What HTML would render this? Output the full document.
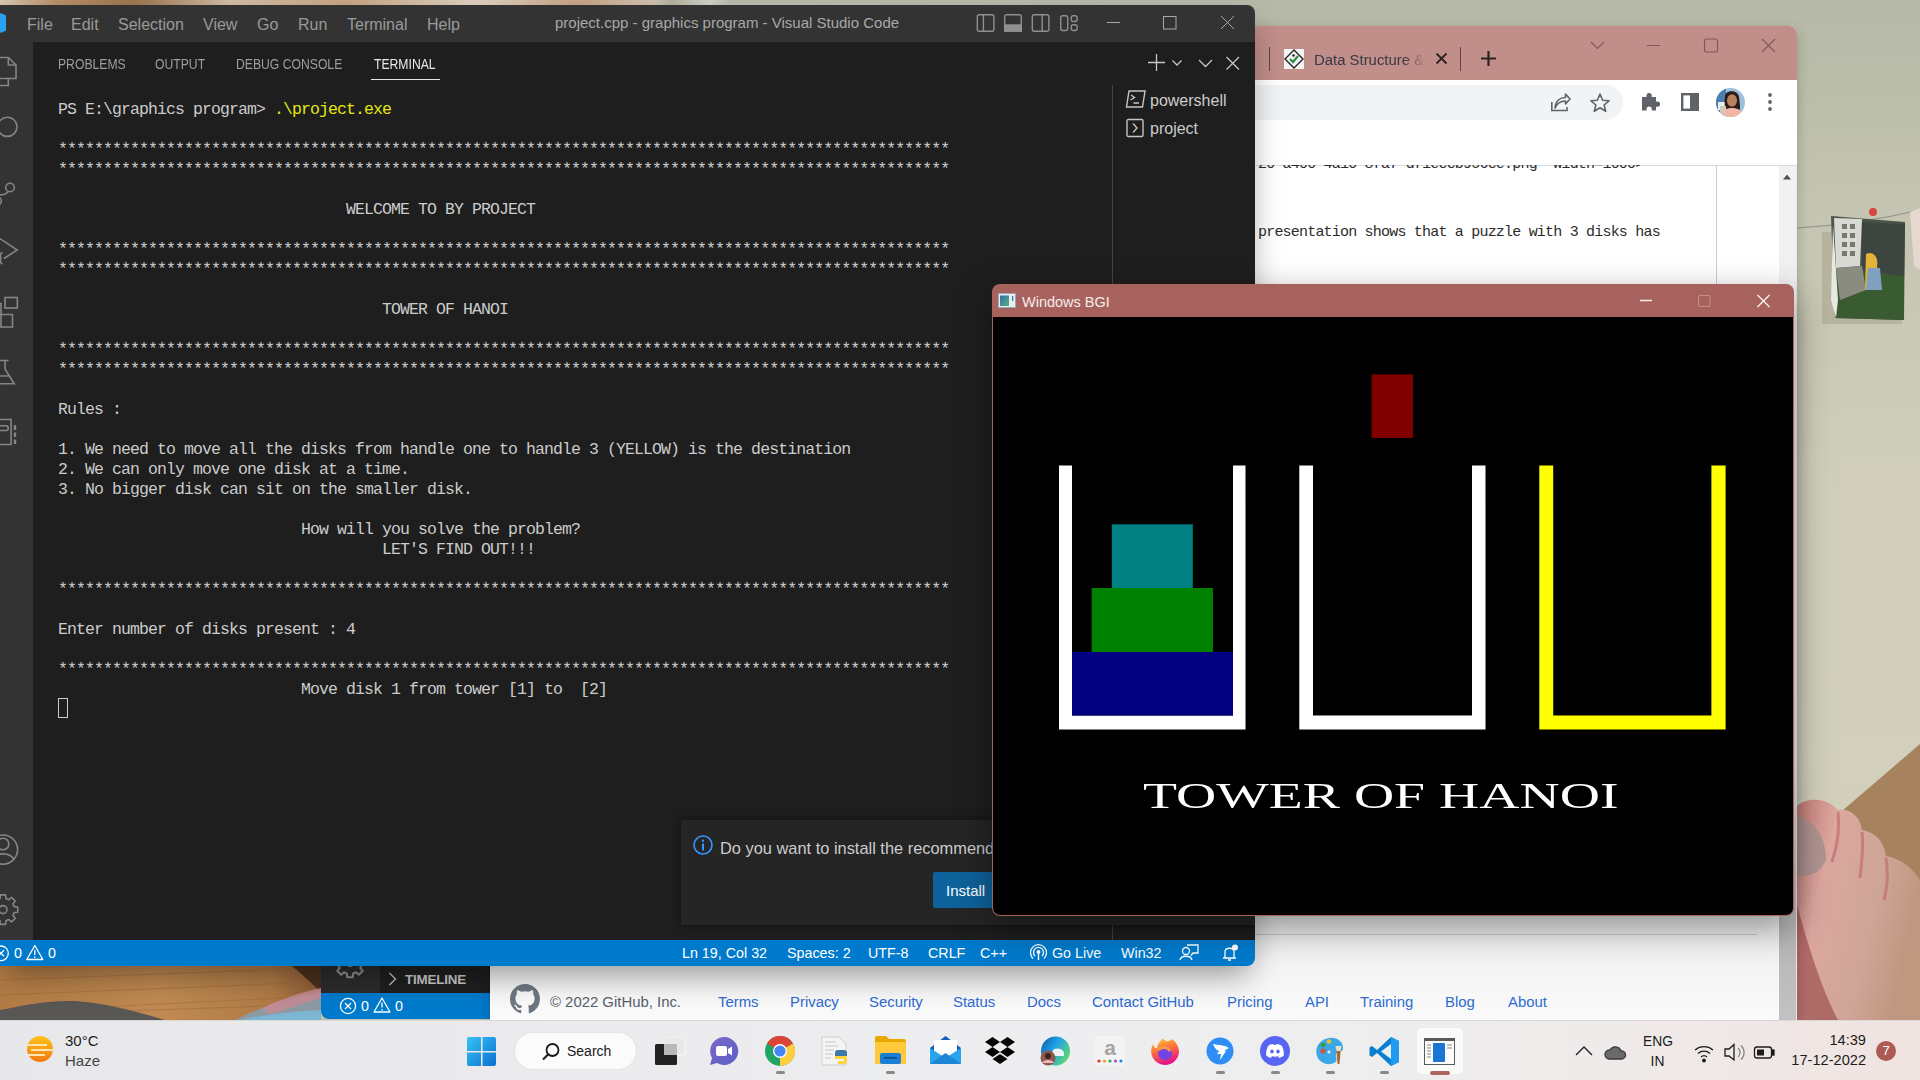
<!DOCTYPE html>
<html><head><meta charset="utf-8">
<style>
*{margin:0;padding:0;box-sizing:border-box}
html,body{width:1920px;height:1080px;overflow:hidden;position:relative;background:#c0c0b0;font-family:"Liberation Sans",sans-serif}
.a{position:absolute}
.mono{font-family:"Liberation Mono",monospace}
/* wallpaper */
#wp-top{left:0;top:0;width:1920px;height:30px;background:linear-gradient(90deg,#c9a887 0%,#d9c3a8 10%,#c3a07c 20%,#dbc8b0 30%,#c7a684 45%,#cfc1aa 55%,#b9bba9 65%,#b9bcab 100%)}
#wp-right{left:1797px;top:0;width:123px;height:1020px;background:linear-gradient(180deg,#b8bcab 0%,#c9c9b6 12%,#d6d4c1 30%,#d9d7c4 60%,#d2cdb9 72%,#c9a99a 80%,#d79a8f 88%,#c07466 100%)}
#wp-floor{left:0;top:960px;width:330px;height:60px;background:linear-gradient(180deg,#a8733f,#b98249 60%,#6b6460 100%)}

/* VS Code */
#vsc{left:0;top:0;width:1255px;height:966px;overflow:hidden}
#vsc-sh{left:0;top:5px;width:1255px;height:961px;border-radius:0 8px 8px 0;box-shadow:0 14px 32px -6px rgba(0,0,0,.4)}
#vsc .title{left:0;top:5px;width:1255px;height:37px;background:#333333;border-radius:0 8px 0 0}
#vsc .menu{top:16px;font-size:16px;color:#9a9a9a;}
#vsc .wtitle{top:14px;left:555px;font-size:15px;color:#a8a8a8}
#vsc .act{left:0;top:42px;width:33px;height:898px;background:#333333}
#vsc .panel{left:33px;top:42px;width:1222px;height:898px;background:#1e1e1e}
#vsc .tab{top:56px;font-size:14.5px;transform:scaleX(0.84);transform-origin:0 0;color:#9d9d9d;white-space:nowrap}
.st{top:945px;font-size:14.3px;color:#fff;white-space:nowrap}
#vsc .status{left:0;top:940px;width:1255px;height:26px;background:#007acc;border-radius:0 0 8px 0}
.term{left:58px;top:100px;font-size:16.5px;letter-spacing:-0.9px;line-height:20px;color:#cccccc;white-space:pre}
.y{color:#e5e510}

/* Chrome */
#chr{left:490px;top:26px;width:1307px;height:994px;background:#fff;border-radius:8px 8px 0 0;overflow:hidden;box-shadow:0 4px 14px rgba(0,0,0,.2)}
.gh{top:967.5px;font-size:14.9px;color:#2e6bd1;white-space:nowrap}
/* BGI */
#bgi{left:992px;top:284px;width:802px;height:632px;background:#a8625e;border-radius:8px;overflow:hidden;box-shadow:0 12px 36px rgba(0,0,0,.4)}
#bgi .cv{left:1px;top:33px;width:800px;height:598px;background:#000;border-radius:0 0 7px 7px;overflow:hidden}

/* taskbar */
#tb{left:0;top:1020px;width:1920px;height:60px;background:linear-gradient(90deg,#e7e8eb 0%,#ebe9eb 25%,#ecedef 45%,#eeeeef 70%,#efe9e8 88%,#f0e3e0 100%);border-top:1px solid #d9d9d9}
</style></head>
<body>
<svg class="a" style="left:0;top:0" width="1920" height="1080" viewBox="0 0 1920 1080">
  <defs>
    <linearGradient id="wall" x1="0" y1="0" x2="0" y2="1"><stop offset="0" stop-color="#b6b9a7"/><stop offset="0.2" stop-color="#c3c4b1"/><stop offset="0.45" stop-color="#d0cebb"/><stop offset="0.75" stop-color="#d2d0bc"/><stop offset="1" stop-color="#cfcbb6"/></linearGradient>
    <linearGradient id="topg" x1="0" y1="0" x2="1" y2="0"><stop offset="0" stop-color="#d8c8b4"/><stop offset="0.03" stop-color="#b98f68"/><stop offset="0.07" stop-color="#9c7650"/><stop offset="0.12" stop-color="#d3bfa6"/><stop offset="0.18" stop-color="#c8a684"/><stop offset="0.25" stop-color="#e0d3c2"/><stop offset="0.3" stop-color="#c7a483"/><stop offset="0.34" stop-color="#d0c2b0"/><stop offset="0.35" stop-color="#b4b39e"/><stop offset="0.37" stop-color="#d3d3c8"/><stop offset="0.38" stop-color="#b9bcab"/><stop offset="1" stop-color="#b6b9a8"/></linearGradient>
    <linearGradient id="wood" x1="0" y1="0" x2="1" y2="0"><stop offset="0" stop-color="#b27b45"/><stop offset="0.5" stop-color="#c08a52"/><stop offset="0.85" stop-color="#b07a46"/><stop offset="1" stop-color="#8a5a34"/></linearGradient>
    <linearGradient id="foot" x1="0" y1="0" x2="1" y2="0.4"><stop offset="0" stop-color="#c77d78"/><stop offset="0.3" stop-color="#dca79f"/><stop offset="0.7" stop-color="#cfa598"/><stop offset="1" stop-color="#c09880"/></linearGradient>
  </defs>
  <rect x="0" y="0" width="1920" height="30" fill="url(#topg)"/>
  <rect x="1255" y="0" width="665" height="1020" fill="url(#wall)"/>
  <!-- hanging photo -->
  <path d="M1797 228 C1830 226 1870 222 1920 210" stroke="#8f8f86" stroke-width="1.2" fill="none"/>
  <rect x="1822" y="232" width="80" height="92" fill="#a8a48c" opacity="0.55"/>
  <path d="M1831 216 L1905 222 L1904 320 L1835 318 Z" fill="#4a5448"/>
  <path d="M1834 218 L1862 219 L1860 266 L1836 268 Z" fill="#d9d9d4"/>
  <path d="M1842 224 h5 v5 h-5z M1850 224 h5 v5 h-5z M1842 233 h5 v5 h-5z M1850 233 h5 v5 h-5z M1842 242 h5 v5 h-5z M1850 242 h5 v5 h-5z M1842 251 h5 v5 h-5z M1850 251 h5 v5 h-5z" fill="#77776f"/>
  <path d="M1862 222 L1905 224 L1904 280 L1862 270 Z" fill="#3d4540"/>
  <path d="M1836 268 L1904 276 L1904 320 L1835 318 Z" fill="#3a5a32"/>
  <path d="M1836 268 L1862 266 L1866 290 L1840 300 Z" fill="#8a8c80"/>
  <path d="M1866 254 C1873 250 1879 258 1877 266 L1880 288 L1865 290 Z" fill="#e2b53a"/>
  <path d="M1868 268 L1880 268 L1882 290 L1866 290 Z" fill="#7fa0c0"/>
  <path d="M1833 225 L1838 300 L1836 318 L1831 300 Z" fill="#e8e8e2"/>
  <circle cx="1873" cy="212" r="4" fill="#d8453f"/>
  <path d="M1910 212 L1920 208 L1920 270 L1914 266 Z" fill="#e6d8d0"/>
  <!-- leg and foot -->
  <path d="M1920 744 L1842 811 L1830 900 L1920 960 Z" fill="#a6825e"/>
  <path d="M1797 806 C1805 798 1825 796 1838 810 C1850 808 1860 816 1862 830 C1874 832 1884 840 1886 856 C1898 858 1912 866 1920 880 L1920 1020 L1797 1020 Z" fill="url(#foot)"/>
  <path d="M1797 815 C1812 820 1826 835 1826 860 C1820 875 1805 878 1797 874 Z" fill="#a89290" opacity="0.85"/>
  <path d="M1832 862 C1836 850 1840 830 1838 812 M1860 878 C1862 860 1864 845 1862 832 M1884 900 C1888 885 1888 870 1886 858" stroke="#c2706e" stroke-width="3" fill="none" opacity="0.75"/>
  <path d="M1797 905 C1808 945 1822 990 1838 1020 L1797 1020 Z" fill="#8e3b3a" opacity="0.55"/>
  <!-- floor -->
  <rect x="0" y="966" width="321" height="54" fill="url(#wood)"/>
  <path d="M0 980 L321 968 M0 995 L321 982 M40 1010 L321 996 M100 1012 L321 1004" stroke="#9b6a3a" stroke-width="1.2" opacity="0.5"/>
  <path d="M292 966 L321 966 L321 992 C312 984 302 974 292 966 Z" fill="#3a2618" opacity="0.8"/>
  <path d="M0 1010 C20 1006 45 1000 75 1001 C105 1003 135 1011 165 1020 L0 1020 Z" fill="#595754"/>
  <path d="M235 1020 C255 1010 285 998 321 992 L321 1020 Z" fill="#8d9aa4"/>
  <path d="M262 1008 C280 1000 300 992 321 988 L321 998 C300 1004 285 1010 270 1014 Z" fill="#c88b96" opacity="0.85"/>
  <path d="M240 1020 C262 1015 290 1012 321 1010 L321 1020 Z" fill="#79bde0" opacity="0.8"/>
</svg>

<div id="vsc2" class="a" style="left:321px;top:966px;width:169px;height:53px;overflow:hidden;border-radius:0 0 0 8px">
  <div class="a" style="left:0;top:0;width:59px;height:27px;background:#2c2c2c"></div>
  <div class="a" style="left:59px;top:0;width:110px;height:27px;background:#1f1f1f"></div>
  <svg class="a" style="left:12px;top:-21px" width="34" height="34" viewBox="0 0 34 34" fill="none" stroke="#8a8a8a" stroke-width="2.2"><circle cx="17" cy="17" r="4"/><path d="M28.59 13.89 L32.26 14.31 L32.26 19.69 L28.59 20.11 L27.39 23.00 L29.70 25.89 L25.89 29.70 L23.00 27.39 L20.11 28.59 L19.69 32.26 L14.31 32.26 L13.89 28.59 L11.00 27.39 L8.11 29.70 L4.30 25.89 L6.61 23.00 L5.41 20.11 L1.74 19.69 L1.74 14.31 L5.41 13.89 L6.61 11.00 L4.30 8.11 L8.11 4.30 L11.00 6.61 L13.89 5.41 L14.31 1.74 L19.69 1.74 L20.11 5.41 L23.00 6.61 L25.89 4.30 L29.70 8.11 L27.39 11.00 Z" stroke-linejoin="round"/></svg>
  <svg class="a" style="left:67px;top:6px" width="10" height="14" viewBox="0 0 10 14"><path d="M1.5 1 L7.5 7 L1.5 13" fill="none" stroke="#c5c5c5" stroke-width="1.3"/></svg>
  <div class="a" style="left:84px;top:6px;font-size:13.4px;font-weight:bold;color:#cccccc;letter-spacing:-0.2px">TIMELINE</div>
  <div class="a" style="left:0;top:27px;width:169px;height:26px;background:#007acc"></div>
  <svg class="a" style="left:0;top:27px" width="169" height="26" viewBox="0 0 169 26" fill="none" stroke="#fff" stroke-width="1.3"><circle cx="27" cy="13" r="7.6"/><path d="M24 10 L30 16 M30 10 L24 16"/><path d="M61 5 L69 19 H53 Z" stroke-linejoin="round"/><path d="M61 9.5 V14.5 M61 16 V17.5"/></svg>
  <div class="a" style="left:40px;top:32px;font-size:14.3px;color:#fff">0</div>
  <div class="a" style="left:74px;top:32px;font-size:14.3px;color:#fff">0</div>
</div>
<div id="chr" class="a">
  <div class="a" style="left:0;top:0;width:1307px;height:54px;background:#c18e8a"></div>
  <div class="a" style="left:779px;top:21px;width:1.3px;height:24px;background:#5a4745"></div>
  <svg class="a" style="left:794px;top:23px" width="20" height="20" viewBox="0 0 20 20"><rect width="20" height="20" fill="#f4f4f4"/><path d="M10 1 L19 10 L10 19 L1 10 Z" fill="none" stroke="#222" stroke-width="1.4"/><path d="M6 10 L9 13 L14 7" fill="none" stroke="#2f8d46" stroke-width="2.2"/><circle cx="9.5" cy="6.5" r="1.3" fill="#222"/></svg>
  <div class="a" style="left:824px;top:25.5px;font-size:14.9px;color:#363a44;white-space:nowrap;width:112px;overflow:hidden;-webkit-mask-image:linear-gradient(90deg,#000 80%,transparent)">Data Structure &amp; Algo</div>
  <svg class="a" style="left:944px;top:25px" width="16" height="16" viewBox="0 0 16 16"><path d="M2.5 2.5 L12.5 12.5 M12.5 2.5 L2.5 12.5" stroke="#2a2424" stroke-width="1.8"/></svg>
  <div class="a" style="left:970px;top:21px;width:1.3px;height:24px;background:#5a4745"></div>
  <svg class="a" style="left:989px;top:23px" width="18" height="18" viewBox="0 0 18 18"><path d="M9.5 2 V17 M2 9.5 H17" stroke="#2a2424" stroke-width="2.2"/></svg>
  <svg class="a" style="left:1090px;top:8px" width="200" height="30" viewBox="0 0 200 30" fill="none" stroke="#7d5955" stroke-width="1.1">
    <path d="M11 8 L17.5 14.5 L24 8"/>
    <path d="M67 11.5 H80"/>
    <rect x="124.5" y="5" width="13" height="13" rx="2"/>
    <path d="M182 5 L195 18 M195 5 L182 18"/>
  </svg>
  <!-- page -->
  <div class="a" style="left:0;top:139px;width:1307px;height:1px;background:#d7dadf"></div>
  <div class="a" style="left:1226px;top:140px;width:1px;height:740px;background:#c8cdd4"></div>
  <div class="a" style="left:1289px;top:140px;width:18px;height:854px;background:linear-gradient(180deg,#f1f1f1 0%,#eeeeee 70%,#b5b5b5 89%,#c2c2c2 100%)"></div><div class="a" style="left:1306px;top:140px;width:1px;height:854px;background:#e8e8e8"></div>
  <svg class="a" style="left:1292px;top:147px" width="10" height="8" viewBox="0 0 10 8"><path d="M1 6.5 L5 1.5 L9 6.5 Z" fill="#505050"/></svg>
  <div class="a mono" style="left:768px;top:130px;font-size:15px;letter-spacing:-0.8px;color:#2b2b2b;white-space:nowrap">20-a400-4a10-8fa7-df1eccb956ce.png" width=1000&gt;</div>
  <div class="a" style="left:0;top:54px;width:1307px;height:85px;background:#ffffff"></div>
  <div class="a" style="left:300px;top:59px;width:833px;height:35px;background:#f1f3f4;border-radius:18px"></div>
  <svg class="a" style="left:1050px;top:60px" width="250" height="35" viewBox="0 0 250 35" fill="none" stroke="#5f6368" stroke-width="1.6">
    <path d="M11.8 16 V24.5 H27 V21"/><path d="M15 22 C15.5 15 20 11.5 25.5 11.5 V8 L30 13 L25.5 18 V15 C20.5 15 17 17 15 22 Z" stroke-linejoin="round"/>
    <path d="M60 8 L62.6 14.3 L69 14.8 L64.1 19 L65.7 25.3 L60 21.8 L54.3 25.3 L55.9 19 L51 14.8 L57.4 14.3 Z" stroke-linejoin="round"/>
    <path d="M102 11 h4.5 v-1.5 a2.6 2.6 0 0 1 5.2 0 v1.5 h4.3 v4.5 h1.5 a2.6 2.6 0 0 1 0 5.2 h-1.5 v3.8 h-4.2 v-1.5 a2.6 2.6 0 0 0 -5.2 0 v1.5 h-4.6 z" fill="#5f6368" stroke="none"/>
    <rect x="142.2" y="8.2" width="15.6" height="15.6" stroke-width="2.4"/><rect x="150" y="8" width="8" height="16" fill="#5f6368" stroke="none"/>
    <circle cx="230" cy="9" r="1.9" fill="#5f6368" stroke="none"/><circle cx="230" cy="16" r="1.9" fill="#5f6368" stroke="none"/><circle cx="230" cy="23" r="1.9" fill="#5f6368" stroke="none"/>
  </svg>
  <svg class="a" style="left:1226px;top:62px" width="29" height="29" viewBox="0 0 29 29"><defs><clipPath id="av"><circle cx="14.5" cy="14.5" r="14.5"/></clipPath></defs><g clip-path="url(#av)"><rect width="29" height="29" fill="#9cc0dc"/><rect x="0" y="0" width="10" height="29" fill="#4a7fb0"/><rect x="2" y="14" width="8" height="8" fill="#e9eef2"/><path d="M9 8 C9 2 22 1 23 9 C24 16 25 22 22 26 L10 26 C9 20 8 14 9 8 Z" fill="#2a1c18"/><ellipse cx="16" cy="12.5" rx="5" ry="6.2" fill="#b9805e"/><path d="M4 29 C6 21 12 20 16 20 C21 20 27 22 28 29 Z" fill="#f3b6a4"/><rect x="4" y="18" width="6" height="8" fill="#d8c8b8"/></g></svg>
  <div class="a mono" style="left:768px;top:198px;font-size:15px;letter-spacing:-0.8px;color:#2b2b2b;white-space:nowrap">presentation shows that a puzzle with 3 disks has</div>
  <div class="a" style="left:765px;top:908px;width:502px;height:1px;background:#d0d7de"></div>
  <div class="a" style="left:0;top:890px;width:1289px;height:104px;background:linear-gradient(180deg,rgba(0,0,0,0.07),rgba(0,0,0,0.03) 70%,rgba(0,0,0,0.02))"></div>
  <svg class="a" style="left:20px;top:958px" width="30" height="30" viewBox="0 0 16 16"><path fill="#6e7781" d="M8 0C3.58 0 0 3.58 0 8c0 3.54 2.29 6.53 5.47 7.59.4.07.55-.17.55-.38 0-.19-.01-.82-.01-1.49-2.01.37-2.53-.49-2.69-.94-.09-.23-.48-.94-.82-1.13-.28-.15-.68-.52-.01-.53.63-.01 1.08.58 1.23.82.72 1.21 1.87.87 2.33.66.07-.52.28-.87.51-1.07-1.78-.2-3.64-.89-3.64-3.95 0-.87.31-1.59.82-2.15-.08-.2-.36-1.02.08-2.12 0 0 .67-.21 2.2.82.64-.18 1.32-.27 2-.27.68 0 1.36.09 2 .27 1.53-1.04 2.2-.82 2.2-.82.44 1.1.16 1.92.08 2.12.51.56.82 1.27.82 2.15 0 3.07-1.87 3.75-3.65 3.95.29.25.54.73.54 1.48 0 1.07-.01 1.93-.01 2.2 0 .21.15.46.55.38A8.013 8.013 0 0016 8c0-4.42-3.58-8-8-8z"/></svg>
  <div class="a gh" style="left:60px;color:#57606a">© 2022 GitHub, Inc.</div>
  <div class="a gh" style="left:228px">Terms</div>
  <div class="a gh" style="left:300px">Privacy</div>
  <div class="a gh" style="left:379px">Security</div>
  <div class="a gh" style="left:463px">Status</div>
  <div class="a gh" style="left:537px">Docs</div>
  <div class="a gh" style="left:602px">Contact GitHub</div>
  <div class="a gh" style="left:737px">Pricing</div>
  <div class="a gh" style="left:815px">API</div>
  <div class="a gh" style="left:870px">Training</div>
  <div class="a gh" style="left:955px">Blog</div>
  <div class="a gh" style="left:1018px">About</div>
</div>

<div id="vsc-sh" class="a"></div>
<div id="vsc" class="a">
  <div class="title a"></div>
  <svg class="a" style="left:-12px;top:13px" width="18" height="20" viewBox="0 0 18 20"><path d="M13 0 L18 2.5 V17.5 L13 20 L4 12 L0 15 V5 L4 8 Z" fill="#2aa0f0"/></svg>
  <div class="a menu" style="left:27px">File</div>
  <div class="a menu" style="left:71px">Edit</div>
  <div class="a menu" style="left:118px">Selection</div>
  <div class="a menu" style="left:203px">View</div>
  <div class="a menu" style="left:257px">Go</div>
  <div class="a menu" style="left:298px">Run</div>
  <div class="a menu" style="left:347px">Terminal</div>
  <div class="a menu" style="left:427px">Help</div>
  <div class="a wtitle">project.cpp - graphics program - Visual Studio Code</div>
  <svg class="a" style="left:970px;top:5px" width="120" height="37" viewBox="0 0 120 37" fill="none" stroke="#8f8f8f" stroke-width="1.4">
    <rect x="7.3" y="9.7" width="16.6" height="16.6" rx="2"/><line x1="13.4" y1="9.7" x2="13.4" y2="26.3"/>
    <rect x="34.7" y="9.7" width="16.6" height="16.6" rx="2"/><rect x="34.7" y="20" width="16.6" height="6.3" fill="#8f8f8f"/>
    <rect x="62.3" y="9.7" width="16.6" height="16.6" rx="2"/><line x1="72.2" y1="9.7" x2="72.2" y2="26.3"/>
    <rect x="90.7" y="10.7" width="7" height="14.8" rx="2"/><rect x="101.3" y="10.7" width="5.8" height="5.8" rx="2"/><rect x="101.3" y="19.7" width="5.8" height="5.8" rx="2"/>
  </svg>
  <svg class="a" style="left:1090px;top:5px" width="165" height="37" viewBox="0 0 165 37" fill="none" stroke="#a8a8a8" stroke-width="1">
    <line x1="17" y1="17.5" x2="30" y2="17.5"/>
    <rect x="73.5" y="11.5" width="12.5" height="12.5"/>
    <path d="M131 11 L144 24 M144 11 L131 24"/>
  </svg>
  <div class="act a"></div>
  <div class="panel a"></div>
  <div class="a tab" style="left:58px">PROBLEMS</div>
  <div class="a tab" style="left:155px">OUTPUT</div>
  <div class="a tab" style="left:236px">DEBUG CONSOLE</div>
  <div class="a tab" style="left:374px;color:#e7e7e7">TERMINAL</div>
  <div class="a" style="left:371px;top:79px;width:69px;height:1.3px;background:#e7e7e7"></div>
  <svg class="a" style="left:1140px;top:50px" width="110" height="35" viewBox="0 0 110 35" fill="none" stroke="#c5c5c5" stroke-width="1.3">
    <path d="M16.5 4 V21 M8 12.5 H25"/>
    <path d="M32.5 10.5 L37 15 L41.5 10.5"/>
    <path d="M59 10 L65.5 16.5 L72 10"/>
    <path d="M86.5 7 L99 19.5 M99 7 L86.5 19.5"/>
  </svg>
  <div class="a" style="left:1112px;top:85px;width:1px;height:855px;background:#454545"></div>
  <svg class="a" style="left:1124px;top:88px" width="26" height="50" viewBox="0 0 26 50" fill="none" stroke="#c5c5c5" stroke-width="1.4">
    <path d="M5 3 H21 L18.5 19 H2.5 Z"/><path d="M7 7 L10.5 9.5 L6.5 12 M9.5 15 H15"/>
    <rect x="3" y="31.5" width="16" height="17" rx="1.5"/><path d="M9 35.5 L13 40 L9 44.5"/>
  </svg>
  <div class="a" style="left:1150px;top:92px;font-size:16px;color:#cccccc">powershell</div>
  <div class="a" style="left:1150px;top:120px;font-size:16px;color:#cccccc">project</div>
  <div class="term a mono">PS E:\graphics program&gt; <span class="y">.\project.exe</span>

***************************************************************************************************
***************************************************************************************************

                                WELCOME TO BY PROJECT

***************************************************************************************************
***************************************************************************************************

                                    TOWER OF HANOI

***************************************************************************************************
***************************************************************************************************

Rules :

1. We need to move all the disks from handle one to handle 3 (YELLOW) is the destination
2. We can only move one disk at a time.
3. No bigger disk can sit on the smaller disk.

                           How will you solve the problem?
                                    LET'S FIND OUT!!!

***************************************************************************************************

Enter number of disks present : 4

***************************************************************************************************
                           Move disk 1 from tower [1] to  [2]
</div>
  <div class="a" style="left:58px;top:698px;width:10px;height:20px;border:1.5px solid #cccccc"></div>
  <svg class="a" style="left:0;top:0" width="33" height="940" viewBox="0 0 33 940" fill="none" stroke="#858585" stroke-width="1.6">
    <path d="M-10 57.5 H8.3 L16 65 V78.5 H-10 M8.3 57.5 V65 H16 M8.3 78.5 V85.5 H-10"/>
    <circle cx="7.4" cy="126.8" r="9.6"/>
    <circle cx="10" cy="187.5" r="4.3"/><path d="M8 191.5 C6 195 3 195 -5 195"/><circle cx="-3" cy="201" r="4.3"/><path d="M-3 172 V183"/><circle cx="-3" cy="180" r="1"/>
    <path d="M-10 232 L17.2 250 L4 258.5"/><path d="M2.5 252.5 C0 253 0 256 1 258 C0 260 0 263 2.5 264"/>
    <rect x="5" y="297.5" width="12.3" height="10.5"/><path d="M-10 303.5 H1 V327 M-10 314.5 H12.5 V327 H-10"/>
    <path d="M-5 360.5 H8.6 M5 360.5 V369 L14.2 383.8 H-5 M-5 376 H9"/>
    <path d="M-5 419.5 H11.1 V444.5 H-5 M-5 425.8 H6 C9 425.8 9 430.5 6 430.5 H-5"/><path d="M15 425 V430 M15 432.5 V437 M15 439.5 V444" stroke-width="2.4"/>
    <circle cx="3" cy="849.6" r="14.6"/><circle cx="3" cy="844" r="5.8"/><path d="M-8 859.5 C-4 852 10 852 14 859.5"/>
    <circle cx="3" cy="909.6" r="4"/>
    <path d="M14.11 906.62 L17.77 907.00 L17.77 912.20 L14.11 912.58 L12.96 915.35 L15.29 918.20 L11.60 921.89 L8.75 919.56 L5.98 920.71 L5.60 924.37 L0.40 924.37 L0.02 920.71 L-2.75 919.56 L-5.60 921.89 L-9.29 918.20 L-6.96 915.35 L-8.11 912.58 L-11.77 912.20 L-11.77 907.00 L-8.11 906.62 L-6.96 903.85 L-9.29 901.00 L-5.60 897.31 L-2.75 899.64 L0.02 898.49 L0.40 894.83 L5.60 894.83 L5.98 898.49 L8.75 899.64 L11.60 897.31 L15.29 901.00 L12.96 903.85 Z" stroke-linejoin="round"/>
  </svg>
  <!-- notification -->
  <div class="a" style="left:681px;top:820px;width:600px;height:105px;background:#252526;box-shadow:0 0 10px rgba(0,0,0,.45)"></div>
  <svg class="a" style="left:692px;top:834px" width="22" height="22" viewBox="0 0 22 22"><circle cx="11" cy="11" r="9" fill="none" stroke="#3794ff" stroke-width="1.6"/><rect x="10" y="9.5" width="2" height="7" fill="#3794ff"/><circle cx="11" cy="6.8" r="1.2" fill="#3794ff"/></svg>
  <div class="a" style="left:720px;top:839px;font-size:16.4px;color:#cccccc;white-space:nowrap">Do you want to install the recommended extensions?</div>
  <div class="a" style="left:933px;top:872px;width:80px;height:36px;background:#0e639c;border-radius:2px"></div>
  <div class="a" style="left:946px;top:882px;font-size:15px;color:#ffffff">Install</div>
  <div class="status a"></div>
  <div class="a st" style="left:14px">0</div>
  <div class="a st" style="left:48px">0</div>
  <svg class="a" style="left:-10px;top:940px" width="60" height="26" viewBox="0 0 60 26" fill="none" stroke="#fff" stroke-width="1.3"><circle cx="11" cy="13.3" r="7.3"/><path d="M8 10.3 L14 16.3 M14 10.3 L8 16.3"/><path d="M44.8 5.5 L52.8 19.5 H36.8 Z" stroke-linejoin="round"/><path d="M44.8 10 V15 M44.8 16.5 V18"/></svg>
  <div class="a st" style="left:682px">Ln 19, Col 32</div>
  <div class="a st" style="left:787px">Spaces: 2</div>
  <div class="a st" style="left:868px">UTF-8</div>
  <div class="a st" style="left:928px">CRLF</div>
  <div class="a st" style="left:980px">C++</div>
  <div class="a st" style="left:1052px">Go Live</div>
  <div class="a st" style="left:1121px">Win32</div>
  <svg class="a" style="left:1030px;top:943px" width="225" height="20" viewBox="0 0 225 20" fill="none" stroke="#fff" stroke-width="1.3">
    <path d="M8.5 17 V11 M5 13 A5 5 0 1 1 12 13 M3 15.5 A8 8 0 1 1 14 15.5"/><circle cx="8.5" cy="9" r="1.3" fill="#fff"/>
    <circle cx="156" cy="8" r="3.5"/><path d="M150 17 C151 12 161 12 162 17 M157 2 H168 V10 H163 L161 12.5"/>
    <path d="M193 15 H206 M195 15 V9 C195 4 204 4 204 9 V15 M198 17 H201"/><circle cx="205" cy="4.5" r="3" fill="#fff" stroke="none"/>
  </svg>
</div>

<div id="bgi" class="a">
  <svg class="a" style="left:6px;top:9px" width="18" height="15" viewBox="0 0 18 15"><rect x="0.5" y="0.5" width="17" height="14" fill="#e8eef2" stroke="#9aa8b0"/><rect x="2" y="2.5" width="9" height="10.5" fill="url(#gi)"/><rect x="14" y="3" width="1.3" height="5" fill="#3a7ab8"/><defs><linearGradient id="gi" x1="0" y1="0" x2="1" y2="1"><stop offset="0" stop-color="#2b6fb0"/><stop offset="1" stop-color="#5bb07a"/></linearGradient></defs></svg>
  <div class="a" style="left:30px;top:9.5px;font-size:14.5px;color:#f4ecea">Windows BGI</div>
  <svg class="a" style="left:640px;top:0" width="162" height="33" viewBox="0 0 162 33" fill="none" stroke-width="1.1">
    <path d="M8 16.5 H20" stroke="#f6eeed" stroke-width="1.6"/>
    <rect x="66.5" y="11.5" width="11.5" height="11" rx="1.5" stroke="#c38d89"/>
    <path d="M125.5 11 L137.5 23 M137.5 11 L125.5 23" stroke="#fbf4f3" stroke-width="1.3"/>
  </svg>
  <div class="cv a">
    <svg class="a" style="left:0;top:0" width="800" height="598" viewBox="993 317 800 598">
      <path d="M1059 465.5 H1072 V715.5 H1233 V465.5 H1245.5 V729.5 H1059 Z" fill="#fff"/>
      <path d="M1299.3 465.5 H1313 V715.5 H1472 V465.5 H1485.5 V729.5 H1299.3 Z" fill="#fff"/>
      <path d="M1539.3 465.5 H1553.2 V715.5 H1711.4 V465.5 H1725.6 V729.5 H1539.3 Z" fill="#ffff00"/>
      <rect x="1072" y="652" width="161" height="63.5" fill="#000080"/>
      <rect x="1091.7" y="588" width="121.3" height="64" fill="#008000"/>
      <rect x="1111.8" y="524.3" width="81" height="63.7" fill="#008080"/>
      <rect x="1371.6" y="374.4" width="41.4" height="63.6" fill="#800000"/>
    </svg>
    <div class="a" style="left:150px;top:458px;font-family:'Liberation Serif',serif;font-size:36px;color:#fff;white-space:nowrap;transform:scaleX(1.547);transform-origin:0 0">TOWER OF HANOI</div>
  </div>
</div>

<div id="tb" class="a">
  <svg class="a" style="left:25px;top:14px" width="32" height="30" viewBox="0 0 32 30">
    <defs><linearGradient id="sun" x1="0" y1="0" x2="0" y2="1"><stop offset="0" stop-color="#ffc21a"/><stop offset="1" stop-color="#f07a10"/></linearGradient></defs>
    <circle cx="15" cy="14" r="13" fill="url(#sun)"/>
    <path d="M1 10 H22 M6 15 H30 M3 20 H20" stroke="#fde6b0" stroke-width="2.2"/>
  </svg>
  <div class="a" style="left:65px;top:11px;font-size:15px;color:#1b1b1b">30°C</div>
  <div class="a" style="left:65px;top:31px;font-size:15px;color:#444">Haze</div>
  <svg class="a" style="left:467px;top:16px" width="30" height="30" viewBox="0 0 30 30">
    <defs><linearGradient id="win" x1="0" y1="0" x2="1" y2="1"><stop offset="0" stop-color="#36c3f5"/><stop offset="1" stop-color="#0a6fd0"/></linearGradient></defs>
    <path d="M2 0 H14 V14 H0 V2 A2 2 0 0 1 2 0 Z M15.5 0 H27 A2 2 0 0 1 29 2 V14 H15.5 Z M0 15.5 H14 V29 H2 A2 2 0 0 1 0 27 Z M15.5 15.5 H29 V27 A2 2 0 0 1 27 29 H15.5 Z" fill="url(#win)"/>
  </svg>
  <div class="a" style="left:514px;top:11px;width:123px;height:38px;background:#fbfbfb;border-radius:19px;border:1px solid #e3e3e3"></div>
  <svg class="a" style="left:541px;top:21px" width="20" height="20" viewBox="0 0 20 20"><circle cx="11.5" cy="8" r="6" fill="none" stroke="#1a1a1a" stroke-width="1.8"/><path d="M7.3 12.2 L2 17.5" stroke="#1a1a1a" stroke-width="2"/></svg>
  <div class="a" style="left:567px;top:22px;font-size:14px;color:#1a1a1a">Search</div>
  <svg class="a" style="left:655px;top:16px" width="32" height="30" viewBox="0 0 32 30">
    <rect x="9" y="0" width="21" height="18" rx="1.5" fill="#e9e9e9" stroke="#f7f7f7"/>
    <rect x="0" y="7" width="22" height="21" rx="1.5" fill="#232323"/>
    <rect x="9" y="7" width="13" height="11" fill="#b9b9b9"/>
  </svg>
  <svg class="a" style="left:709px;top:15px" width="30" height="30" viewBox="0 0 30 30">
    <defs><linearGradient id="tm" x1="0" y1="0" x2="1" y2="1"><stop offset="0" stop-color="#7b68c8"/><stop offset="1" stop-color="#5b5fc7"/></linearGradient></defs>
    <path d="M15 1 A14 14 0 1 1 8 27 L1 29 L3 22 A14 14 0 0 1 15 1 Z" fill="url(#tm)"/>
    <rect x="7" y="10" width="11" height="10" rx="2" fill="#fff"/><path d="M19 13 L23 10.5 V19.5 L19 17 Z" fill="#fff"/>
  </svg>
  <svg class="a" style="left:765px;top:15px" width="30" height="30" viewBox="0 0 30 30">
    <circle cx="15" cy="15" r="15" fill="#1fa463"/>
    <path d="M15 15 L2 7.5 A15 15 0 0 1 28 7.5 Z" fill="#db4437"/>
    <path d="M15 15 L28 7.5 A15 15 0 0 1 15 30 Z" fill="#ffcd40"/>
    <circle cx="15" cy="15" r="7" fill="#fff"/><circle cx="15" cy="15" r="5.6" fill="#4285f4"/>
  </svg>
  <div class="a" style="left:776px;top:50px;width:9px;height:3px;border-radius:2px;background:#888"></div>
  <svg class="a" style="left:821px;top:15px" width="30" height="30" viewBox="0 0 30 30">
    <path d="M1 1 H18 L25 8 V29 H1 Z" fill="#f4f4f4" stroke="#cfcfcf"/>
    <path d="M4 6 H15 M4 10 H17 M4 14 H13 M4 18 H12 M4 22 H10" stroke="#c8c8c8" stroke-width="1"/>
    <path d="M17 14 h6 a3 3 0 0 1 3 3 v3 h-9 v2 h-3 v-5 a3 3 0 0 1 3 -3 z" fill="#3c78aa"/>
    <path d="M26 20 v5 a3 3 0 0 1 -3 3 h-6 v-3 h6 v-2 h-9 v-3 z" fill="#ffd43b"/>
  </svg>
  <svg class="a" style="left:875px;top:15px" width="31" height="30" viewBox="0 0 31 30">
    <path d="M0 2 A2 2 0 0 1 2 0 H11 L14 3 H29 A2 2 0 0 1 31 5 V28 H0 Z" fill="#e8a800"/>
    <path d="M0 6 H31 V28 H0 Z" fill="#ffc83d"/>
    <rect x="5" y="17" width="21" height="11" rx="2" fill="#1b7fd6"/><rect x="9" y="21" width="13" height="1.6" fill="#0b4a8a"/>
  </svg>
  <div class="a" style="left:886px;top:50px;width:9px;height:3px;border-radius:2px;background:#888"></div>
  <svg class="a" style="left:930px;top:15px" width="31" height="30" viewBox="0 0 31 30">
    <path d="M0 12 L15.5 0 L31 12 V28 H0 Z" fill="#0f63b8"/>
    <path d="M4 4 H27 V16 L15.5 23 L4 16 Z" fill="#fff"/>
    <path d="M0 12 L15.5 22 L31 12 V28 H0 Z" fill="#2aa4ec"/>
    <path d="M0 28 L15.5 17 L31 28 Z" fill="#1d86d6"/>
  </svg>
  <svg class="a" style="left:985px;top:16px" width="30" height="28" viewBox="0 0 30 28" fill="#050505">
    <path d="M7.5 0 L15 5 L7.5 10 L0 5 Z M22.5 0 L30 5 L22.5 10 L15 5 Z M7.5 10 L15 15 L7.5 20 L0 15 Z M22.5 10 L30 15 L22.5 20 L15 15 Z M15 17 L22.5 22 L15 27 L7.5 22 Z"/>
  </svg>
  <svg class="a" style="left:1040px;top:15px" width="31" height="30" viewBox="0 0 31 30">
    <defs><linearGradient id="edg" x1="0" y1="0" x2="1" y2="0.6"><stop offset="0" stop-color="#0c59a4"/><stop offset="0.5" stop-color="#1fa0e8"/><stop offset="1" stop-color="#5ad67a"/></linearGradient></defs>
    <circle cx="15.5" cy="15" r="14.5" fill="url(#edg)"/>
    <path d="M14 13 C20 11 25 14 24 20 H14 C12 18 12 14 14 13 Z" fill="#eef3f8"/>
    <circle cx="8" cy="22" r="7.5" fill="#8a5a4a"/><circle cx="8" cy="20" r="3" fill="#3a2520"/><path d="M2 27 C4 23 12 23 14 27" fill="#f3b8c8"/>
  </svg>
  <svg class="a" style="left:1095px;top:15px" width="30" height="30" viewBox="0 0 30 30">
    <rect width="30" height="30" fill="#f3f3f3"/>
    <text x="15" y="19" text-anchor="middle" font-family="Liberation Sans" font-size="21" font-weight="bold" fill="#a5a5a5">a</text>
    <circle cx="4" cy="25" r="1.6" fill="#e3322b"/><circle cx="9.5" cy="25" r="1.6" fill="#f2a12a"/><circle cx="15" cy="25" r="1.6" fill="#36a852"/><circle cx="20.5" cy="25" r="1.6" fill="#9c4fd6"/><circle cx="26" cy="25" r="1.6" fill="#1e88e5"/>
  </svg>
  <svg class="a" style="left:1150px;top:15px" width="30" height="30" viewBox="0 0 30 30">
    <defs><linearGradient id="ff" x1="0" y1="0" x2="0.3" y2="1"><stop offset="0" stop-color="#ffd23a"/><stop offset="0.5" stop-color="#ff7139"/><stop offset="1" stop-color="#e31587"/></linearGradient></defs>
    <path d="M15 29 A14 14 0 0 1 3 8 C4 12 6 13 7 12 C8 6 12 4 13 2 C14 6 20 6 22 3 C25 5 29 10 29 16 A14 14 0 0 1 15 29 Z" fill="url(#ff)"/>
    <circle cx="15" cy="17" r="7" fill="#7542e5"/><path d="M8 14 C12 10 18 11 20 15" stroke="#ff9640" stroke-width="3" fill="none"/>
  </svg>
  <svg class="a" style="left:1206px;top:16px" width="28" height="28" viewBox="0 0 28 28">
    <circle cx="14" cy="14" r="13.5" fill="#2f8ef5"/>
    <path d="M7 7 C12 8 19 8 23 11 L18 14 L20 14 L14 23 L15 17 L11 17 L13 14 C10 13 8 10 7 7 Z" fill="#fff"/>
  </svg>
  <div class="a" style="left:1216px;top:50px;width:9px;height:3px;border-radius:2px;background:#888"></div>
  <svg class="a" style="left:1260px;top:15px" width="30" height="30" viewBox="0 0 30 30">
    <circle cx="15" cy="15" r="15" fill="#5865f2"/>
    <path d="M8 10 C10 8.5 12 8 13 8 L13.5 9 C14.5 8.8 15.5 8.8 16.5 9 L17 8 C18 8 20 8.5 22 10 C23.5 13 24 16 23.8 19.5 C22 21 20.5 21.5 19 22 L18 20.5 C19 20.2 19.5 19.8 20 19.5 C17 21 13 21 10 19.5 C10.5 19.8 11 20.2 12 20.5 L11 22 C9.5 21.5 8 21 6.2 19.5 C6 16 6.5 13 8 10 Z" fill="#fff"/>
    <ellipse cx="12" cy="15.5" rx="1.7" ry="1.9" fill="#5865f2"/><ellipse cx="18" cy="15.5" rx="1.7" ry="1.9" fill="#5865f2"/>
  </svg>
  <div class="a" style="left:1271px;top:50px;width:9px;height:3px;border-radius:2px;background:#888"></div>
  <svg class="a" style="left:1315px;top:15px" width="30" height="30" viewBox="0 0 30 30">
    <path d="M14 2 C22 1 29 6 28 13 C27 17 22 15 21 18 C20 22 24 24 19 27 C13 30 3 27 1.5 18 C0 10 6 3 14 2 Z" fill="#3aa8e8"/>
    <circle cx="8" cy="15" r="2.5" fill="#e0502a"/><circle cx="8" cy="9" r="2.3" fill="#3b9a3a"/><circle cx="14" cy="5.5" r="2.2" fill="#f2c318"/><circle cx="14" cy="16" r="1.6" fill="#dff3ff"/>
    <path d="M21 10 L26 10 L24.5 28 L22.5 28 Z" fill="#a56b2d"/><path d="M20.5 10 L26.5 10 L25.5 15 L21.5 15 Z" fill="#e8e0c8"/>
  </svg>
  <div class="a" style="left:1326px;top:50px;width:9px;height:3px;border-radius:2px;background:#888"></div>
  <svg class="a" style="left:1369px;top:15px" width="31" height="31" viewBox="0 0 31 31">
    <path d="M22 1 L30 5 V26 L22 30 L8 17 L3 21 L0.5 19.5 V11.5 L3 10 L8 14 Z" fill="#0b7fcf"/>
    <path d="M22 8 L12 15.5 L22 23 Z" fill="#e9eef2"/>
    <path d="M22 1 L30 5 V26 L22 30 Z" fill="#1f9cf0"/>
  </svg>
  <div class="a" style="left:1380px;top:50px;width:9px;height:3px;border-radius:2px;background:#888"></div>
  <div class="a" style="left:1416px;top:6px;width:48px;height:48px;border-radius:5px;background:#fafafa;border:1px solid #ececec"></div>
  <svg class="a" style="left:1424px;top:17px" width="31" height="27" viewBox="0 0 31 27">
    <rect x="0.5" y="0.5" width="30" height="26" fill="#fbfbfb" stroke="#5a5a5a"/><rect x="0.5" y="0.5" width="30" height="2.5" fill="#5a5a5a"/>
    <rect x="9" y="5" width="12" height="19" rx="1" fill="#1a76d2"/>
    <path d="M3 7 H7 M3 10 H7 M3 13 H7 M3 16 H7 M3 19 H7 M23 7 H28 M23 10 H28" stroke="#8a8a8a" stroke-width="1"/>
  </svg>
  <div class="a" style="left:1430px;top:50px;width:20px;height:4px;border-radius:2px;background:#b06562"></div>
  <svg class="a" style="left:1574px;top:18px" width="210" height="24" viewBox="0 0 210 24" fill="none" stroke="#1c1c1c" stroke-width="1.3">
    <path d="M2 16 L10 8 L18 16"/>
    <path d="M35 20 H48 A4 4 0 0 0 47 12 A6 6 0 0 0 36 11 A4.5 4.5 0 0 0 35 20 Z" fill="#6a6a6a" stroke="#3a3a3a"/>
    <path d="M121 11 A14 14 0 0 1 139 11 M124 14.5 A9 9 0 0 1 136 14.5 M127 18 A4.5 4.5 0 0 1 133 18"/><circle cx="130" cy="21.5" r="1.3" fill="#1c1c1c"/>
    <path d="M151 10 H155 L160 5.5 V21 L155 17 H151 Z"/><path d="M164 9 A6 6 0 0 1 164 18 M167 6.5 A9.5 9.5 0 0 1 167 20.5" stroke="#888"/>
    <rect x="180.5" y="8" width="17" height="11" rx="2.5"/><rect x="198" y="11" width="2" height="5" fill="#1c1c1c"/><rect x="183" y="10.5" width="7" height="6" fill="#1c1c1c" stroke="none"/>
  </svg>
  <div class="a" style="left:1643px;top:11px;font-size:13.8px;color:#1c1c1c;line-height:20px;text-align:center;width:29px">ENG<br>IN</div>
  <div class="a" style="left:1766px;top:9px;width:100px;font-size:14.6px;color:#1c1c1c;text-align:right;line-height:20px;white-space:nowrap">14:39<br>17-12-2022</div>
  <div class="a" style="left:1876px;top:20px;width:20px;height:20px;border-radius:50%;background:#ad5a55;color:#fff;font-size:13px;text-align:center;line-height:20px">7</div>
</div>
</body></html>
